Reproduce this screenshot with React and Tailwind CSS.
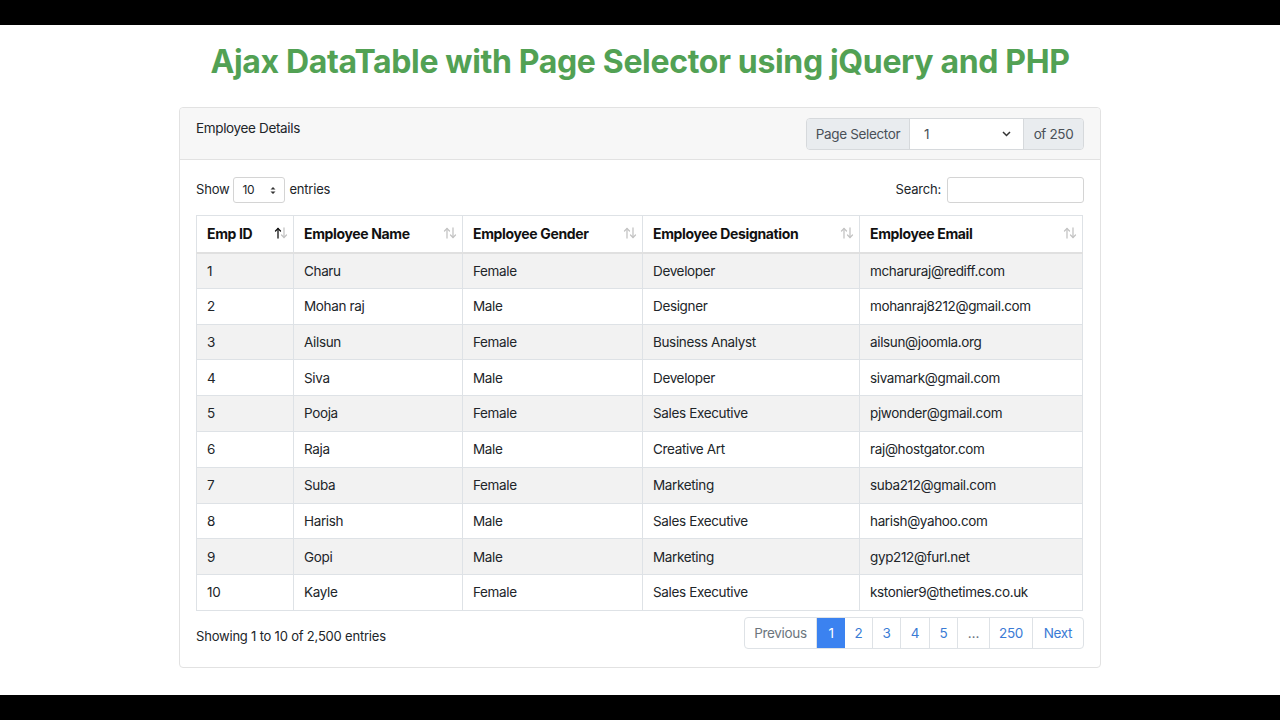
import React from "react";

const rows = [
  ["1", "Charu", "Female", "Developer", "mcharuraj@rediff.com"],
  ["2", "Mohan raj", "Male", "Designer", "mohanraj8212@gmail.com"],
  ["3", "Ailsun", "Female", "Business Analyst", "ailsun@joomla.org"],
  ["4", "Siva", "Male", "Developer", "sivamark@gmail.com"],
  ["5", "Pooja", "Female", "Sales Executive", "pjwonder@gmail.com"],
  ["6", "Raja", "Male", "Creative Art", "raj@hostgator.com"],
  ["7", "Suba", "Female", "Marketing", "suba212@gmail.com"],
  ["8", "Harish", "Male", "Sales Executive", "harish@yahoo.com"],
  ["9", "Gopi", "Male", "Marketing", "gyp212@furl.net"],
  ["10", "Kayle", "Female", "Sales Executive", "kstonier9@thetimes.co.uk"],
];

const cols = [
  { t: "Emp ID", w: "w-[97px]", active: true },
  { t: "Employee Name", w: "w-[169px]" },
  { t: "Employee Gender", w: "w-[180px]" },
  { t: "Employee Designation", w: "w-[217px]" },
  { t: "Employee Email", w: "" },
];

function SortIcon({ active }) {
  return (
    <svg width="14" height="12" viewBox="0 0 14 12" className="shrink-0">
      <g fill="none" strokeWidth="1.3" strokeLinecap="round" strokeLinejoin="round">
        <g stroke={active ? "#111" : "#c4c4c4"}>
          <path d="M4 11V1.5" />
          <path d="M1.5 4L4 1.5L6.5 4" />
        </g>
        <g stroke="#c4c4c4">
          <path d="M10 1v9.5" />
          <path d="M7.5 8L10 10.5L12.5 8" />
        </g>
      </g>
    </svg>
  );
}

export default function App() {
  return (
    <div className="w-[1280px] h-[720px] bg-black flex flex-col" style={{ fontFamily: "Inter, 'Noto Sans', sans-serif" }}>
      <div className="h-[25px] shrink-0" />
      <div className="flex-1 bg-white flex flex-col items-center">
        <h1 className="mt-[18px] text-[32px] leading-[38px] font-bold text-[#52a154] tracking-[-0.35px]">
          Ajax DataTable with Page Selector using jQuery and PHP
        </h1>
        <div className="mt-[26px] w-[922px] h-[561px] border border-[#e2e2e2] rounded-[4px] flex flex-col text-[13.5px] tracking-[-0.35px] text-[#212529]">
          <div className="h-[52px] bg-[#f7f7f7] border-b border-[#e2e2e2] flex justify-between px-[16px] rounded-t-[4px]">
            <div className="pt-[10px]">Employee Details</div>
            <div className="mt-[10px] h-[32px] flex border border-[#d6d9dc] rounded-[4px] overflow-hidden">
              <div className="w-[103px] bg-[#e9ecef] text-[#495057] flex items-center justify-center border-r border-[#d6d9dc]">Page Selector</div>
              <div className="bg-white w-[113px] flex items-center justify-between pl-[14px] pr-[12px] text-[#495057]">
                <span>1</span>
                <svg width="9" height="6" viewBox="0 0 9 6"><path d="M1 1l3.5 3.5L8 1" fill="none" stroke="#333" strokeWidth="1.5" /></svg>
              </div>
              <div className="w-[60px] bg-[#e9ecef] text-[#495057] flex items-center justify-center border-l border-[#d6d9dc]">of 250</div>
            </div>
          </div>
          <div className="px-[16px] pt-[17px]">
            <div className="flex justify-between items-center h-[26px]">
              <div className="flex items-center gap-[4px] text-[13px] tracking-[-0.2px]">
                <span>Show</span>
                <div className="w-[52px] h-[26px] border border-[#d4d4d4] rounded-[3px] flex items-center justify-between pl-[8px] pr-[8px] text-[12px]">
                  <span>10</span>
                  <svg width="6" height="9" viewBox="0 0 6 9"><path d="M0.5 3.5L3 1l2.5 2.5zM0.5 5.5L3 8l2.5-2.5z" fill="#333" /></svg>
                </div>
                <span>entries</span>
              </div>
              <div className="flex items-center gap-[6px] text-[13px] tracking-[-0.2px]">
                <span>Search:</span>
                <div className="w-[137px] h-[26px] border border-[#d4d4d4] rounded-[3px]" />
              </div>
            </div>
            <table className="mt-[12px] w-[887px] border-collapse table-fixed">
              <thead>
                <tr className="h-[37px]">
                  {cols.map((c, i) => (
                    <th key={i} className={`${c.w} border border-[#dee2e6] border-b-2 border-b-[#e0e0e0] px-[10px] text-left font-bold text-[14px] tracking-[-0.35px] text-[#111]`}>
                      <div className="flex items-center justify-between">
                        <span>{c.t}</span>
                        <span className="-mr-[5px] mt-[-2px]"><SortIcon active={c.active} /></span>
                      </div>
                    </th>
                  ))}
                </tr>
              </thead>
              <tbody>
                {rows.map((r, i) => (
                  <tr key={i} className={`h-[35.8px] ${i % 2 === 0 ? "bg-[#f2f2f2]" : "bg-white"}`}>
                    {r.map((c, j) => (
                      <td key={j} className="border border-[#dee2e6] px-[10px] text-[#212529]">{c}</td>
                    ))}
                  </tr>
                ))}
              </tbody>
            </table>
            <div className="flex justify-between items-center mt-[6px]">
              <div className="text-[13px] tracking-[-0.2px] pt-[8px]">Showing 1 to 10 of 2,500 entries</div>
              <div className="flex h-[32px] border border-[#dee2e6] rounded-[4px] overflow-hidden text-[#3a7bd5]">
                <div className="w-[72px] flex items-center justify-center text-[#6c757d] border-r border-[#dee2e6]">Previous</div>
                <div className="w-[28px] flex items-center justify-center bg-[#3b82f0] text-white">1</div>
                {["2", "3", "4", "5"].map((p, i) => (
                  <div key={p} className={`${i === 2 ? "w-[29px]" : "w-[28px]"} flex items-center justify-center border-r border-[#dee2e6]`}>{p}</div>
                ))}
                <div className="w-[32px] flex items-center justify-center text-[#6c757d] border-r border-[#dee2e6]">…</div>
                <div className="w-[43px] flex items-center justify-center border-r border-[#dee2e6]">250</div>
                <div className="w-[50px] flex items-center justify-center">Next</div>
              </div>
            </div>
          </div>
        </div>
      </div>
      <div className="h-[25px] shrink-0" />
    </div>
  );
}
